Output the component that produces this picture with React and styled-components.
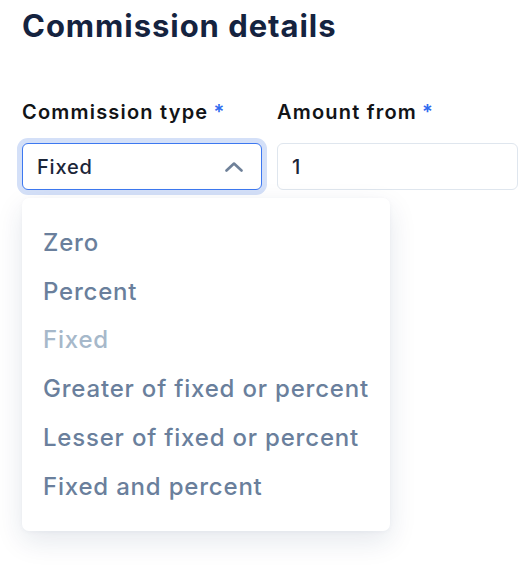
import React from "react";
import styled, { createGlobalStyle } from "styled-components";

const Global = createGlobalStyle`
  html, body { margin: 0; padding: 0; background: #ffffff; }
  body { font-family: Inter, "Open Sans", Arial, sans-serif; -webkit-font-smoothing: antialiased; }
  * { box-sizing: border-box; }
`;

const Page = styled.div`
  width: 526px;
  height: 576px;
  padding: 6px 8px 0 22px;
  background: #ffffff;
`;

const Title = styled.h2`
  margin: 0;
  font-size: 31px;
  line-height: 40px;
  font-weight: 700;
  color: #15233f;
  letter-spacing: 0.95px;
`;

const Fields = styled.div`
  display: grid;
  grid-template-columns: 240px 241px;
  column-gap: 15px;
  margin-top: 54px;
`;

const Field = styled.div`
  display: flex;
  flex-direction: column;
  gap: 19px;
  position: relative;
`;

const Label = styled.label`
  font-size: 20px;
  line-height: 24px;
  font-weight: 600;
  color: #121417;
  white-space: nowrap;
  letter-spacing: 1.2px;
`;

const Required = styled.span`
  color: #2f6bf0;
  margin-left: 5px;
`;

const Control = styled.div`
  height: 47px;
  display: flex;
  align-items: center;
  justify-content: space-between;
  padding: 0 18px 0 14px;
  border-radius: 6px;
  background: #ffffff;
  border: 1px solid ${(p) => (p.$focused ? "#3d78f0" : "#dfe6ee")};
  box-shadow: ${(p) => (p.$focused ? "0 0 0 5px #d4e0f8" : "none")};
  font-size: 20px;
  font-weight: 500;
  letter-spacing: 0.8px;
  color: #1b2538;
`;

const Chevron = styled.svg`
  width: 18px;
  height: 10px;
  flex: none;
`;

const Menu = styled.ul`
  position: absolute;
  top: calc(100% + 8px);
  left: 0;
  width: 368px;
  margin: 0;
  padding: 20px 0;
  list-style: none;
  background: #ffffff;
  border-radius: 7px;
  box-shadow: 0 10px 28px rgba(20, 45, 90, 0.11), 0 1px 4px rgba(20, 45, 90, 0.04);
  z-index: 2;
`;

const Option = styled.li`
  height: 48.8px;
  display: flex;
  align-items: center;
  padding-left: 21px;
  font-size: 24px;
  font-weight: 500;
  letter-spacing: 0.8px;
  color: ${(p) => (p.$disabled ? "#a6b8ca" : "#6a7f9c")};
  white-space: nowrap;
`;

const options = [
  "Zero",
  "Percent",
  "Fixed",
  "Greater of fixed or percent",
  "Lesser of fixed or percent",
  "Fixed and percent",
];

export default function App() {
  return (
    <>
      <Global />
      <Page>
        <Title>Commission details</Title>
        <Fields>
          <Field>
            <Label>
              Commission type<Required>*</Required>
            </Label>
            <Control $focused>
              <span>Fixed</span>
              <Chevron viewBox="0 0 18 10" fill="none">
                <path
                  d="M1.5 8.5L9 1.5L16.5 8.5"
                  stroke="#6f8199"
                  strokeWidth="2.6"
                  strokeLinecap="round"
                  strokeLinejoin="round"
                />
              </Chevron>
            </Control>
            <Menu>
              {options.map((o) => (
                <Option key={o} $disabled={o === "Fixed"}>
                  {o}
                </Option>
              ))}
            </Menu>
          </Field>
          <Field>
            <Label>
              Amount from<Required>*</Required>
            </Label>
            <Control>
              <span>1</span>
            </Control>
          </Field>
        </Fields>
      </Page>
    </>
  );
}
